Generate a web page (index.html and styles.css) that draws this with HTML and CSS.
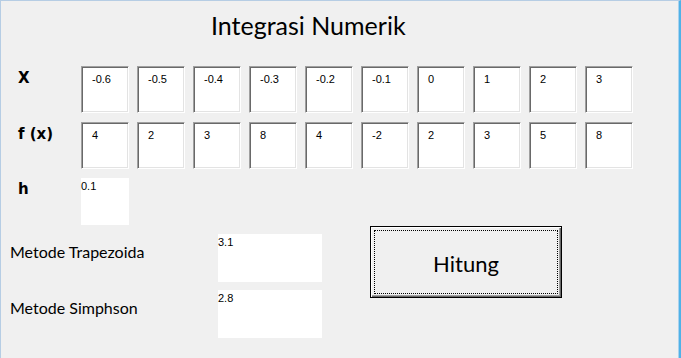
FILE: index.html
```html
<!DOCTYPE html>
<html>
<head>
<meta charset="utf-8">
<link rel="stylesheet" href="styles.css">
</head>
<body>
<div class="window">
  <div class="title-bar"><h1 class="title">Integrasi Numerik</h1></div>
  <div class="row">
    <div class="label">X</div>
    <div class="cells">
      <div class="cell">-0.6</div><div class="cell">-0.5</div><div class="cell">-0.4</div><div class="cell">-0.3</div><div class="cell">-0.2</div><div class="cell">-0.1</div><div class="cell">0</div><div class="cell">1</div><div class="cell">2</div><div class="cell">3</div>
    </div>
  </div>
  <div class="row">
    <div class="label">f (x)</div>
    <div class="cells">
      <div class="cell">4</div><div class="cell">2</div><div class="cell">3</div><div class="cell">8</div><div class="cell">4</div><div class="cell">-2</div><div class="cell">2</div><div class="cell">3</div><div class="cell">5</div><div class="cell">8</div>
    </div>
  </div>
  <div class="row row-h">
    <div class="label">h</div>
    <div class="hbox">0.1</div>
  </div>
  <div class="bottom">
    <div class="results">
      <div class="result">
        <span class="rlabel">Metode Trapezoida</span>
        <div class="rbox">3.1</div>
      </div>
      <div class="result">
        <span class="rlabel">Metode Simphson</span>
        <div class="rbox">2.8</div>
      </div>
    </div>
    <button class="btn"><span class="focus">Hitung</span></button>
  </div>
</div>
</body>
</html>
```
FILE: styles.css
```css
html, body {
  margin: 0;
  padding: 0;
  background: #f0f0f0;
}
.window {
  box-sizing: border-box;
  width: 681px;
  height: 358px;
  background: #f0f0f0;
  border-left: 1px solid #b6cde4;
  border-top: 1px solid #b6cde4;
  border-right: 2px solid #4fb2e8;
  box-shadow: inset -1px 0 0 #a9d2ee;
  overflow: hidden;
}
.title-bar {
  height: 65px;
  padding-left: 210px;
  box-sizing: border-box;
  padding-top: 8px;
}
.title {
  margin: 0;
  font-family: Lato, "Open Sans", sans-serif;
  font-weight: normal;
  font-size: 25px;
  line-height: 32px;
  color: #000;
}
.row {
  display: flex;
  align-items: flex-start;
  height: 47px;
  margin-bottom: 9px;
}
.label {
  width: 80px;
  box-sizing: border-box;
  padding-left: 17px;
  padding-top: 4px;
  font-family: "DejaVu Sans", sans-serif;
  font-weight: bold;
  font-size: 15px;
  line-height: 17px;
  color: #000;
}
.cells {
  display: flex;
  gap: 8px;
}
.cell {
  box-sizing: border-box;
  width: 48px;
  height: 47px;
  background: #fff;
  border: 1px solid;
  border-color: #a0a0a0 #fff #fff #a0a0a0;
  box-shadow: inset 1px 1px 0 #696969, inset -1px -1px 0 #e3e3e3;
  padding: 6px 0 0 10px;
  font-family: "Liberation Sans", Arial, sans-serif;
  font-size: 11px;
  line-height: 13px;
  color: #000;
}
.row-h {
  margin-bottom: 0;
}
.row-h .label {
  padding-top: 3px;
}
.hbox {
  width: 48px;
  height: 47px;
  background: #fff;
  font-family: "Liberation Sans", Arial, sans-serif;
  font-size: 11px;
  line-height: 13px;
  padding-top: 2px;
  box-sizing: border-box;
}
.bottom {
  display: flex;
  align-items: flex-start;
  gap: 48px;
}
.results {
  display: flex;
  flex-direction: column;
  gap: 8px;
  padding-top: 9px;
  padding-left: 9px;
}
.result {
  display: flex;
  align-items: center;
}
.rlabel {
  width: 208px;
  font-family: Lato, "Open Sans", sans-serif;
  font-size: 16px;
  line-height: 20px;
  padding-bottom: 12px;
  color: #000;
}
.rbox {
  width: 104px;
  height: 48px;
  background: #fff;
  box-sizing: border-box;
  padding-top: 2px;
  font-family: "Liberation Sans", Arial, sans-serif;
  font-size: 11px;
  line-height: 13px;
}
.btn {
  margin-top: 1px;
  width: 192px;
  height: 72px;
  box-sizing: border-box;
  display: flex;
  padding: 3px;
  background: #f0f0f0;
  border: 1px solid #000;
  box-shadow: inset 1px 1px 0 #fff, inset -1px -1px 0 #696969, inset -2px -2px 0 #a0a0a0;
}
.focus {
  flex: 1;
  display: flex;
  align-items: center;
  justify-content: center;
  border: 1px dotted #000;
  font-family: Lato, "Open Sans", sans-serif;
  font-size: 22px;
  color: #000;
  padding-top: 2px;
}
```
